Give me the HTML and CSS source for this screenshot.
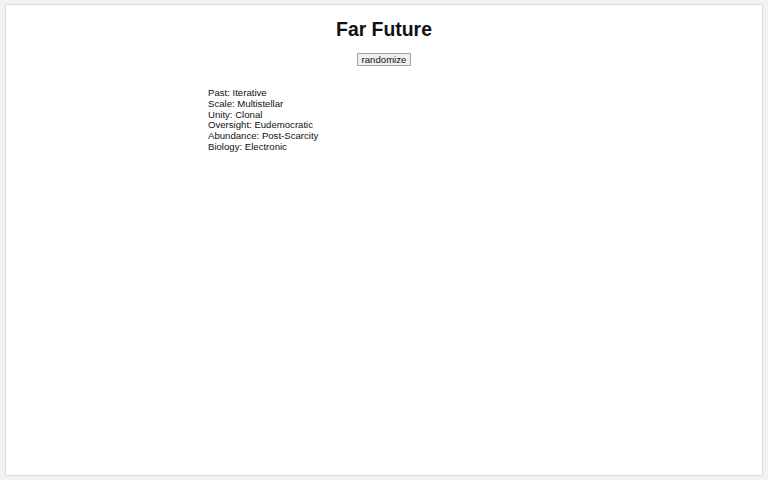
FILE: index.html
```html
<html lang="en">
<head>
  <meta charset="UTF-8">
  <title>Far Future</title>
  <link rel="stylesheet" href="styles.css">
</head>
<body>
  <div class="page">
    <h1>Far Future</h1>
    <div class="controls">
      <button>randomize</button>
    </div>
    <div class="traits">
      <div>Past: Iterative</div>
      <div>Scale: Multistellar</div>
      <div>Unity: Clonal</div>
      <div>Oversight: Eudemocratic</div>
      <div>Abundance: Post-Scarcity</div>
      <div>Biology: Electronic</div>
    </div>
  </div>
</body>
</html>
```

FILE: styles.css
```css
body {
  margin: 0;
  padding: 4px 5px;
  background: #f2f2f2;
  font-family: "Liberation Sans", Arial, sans-serif;
  color: #111;
}

.page {
  height: 472px;
  box-sizing: border-box;
  background: #fff;
  border: 1px solid #dcdcdc;
  padding-top: 13px;
}

h1 {
  margin: 0;
  text-align: center;
  font-size: 19.4px;
  line-height: 22px;
}

.controls {
  margin-top: 13px;
  text-align: center;
}

button {
  font-family: "Liberation Sans", Arial, sans-serif;
  font-size: 9.6px;
  line-height: 11px;
  padding: 0 4px;
  background: #f0f0f0;
  border: 1px solid #a0a0a0;
  border-radius: 1px;
  color: #111;
}

.traits {
  width: 352px;
  margin: 22px auto 0;
  font-size: 9.6px;
  line-height: 10.8px;
}
```
